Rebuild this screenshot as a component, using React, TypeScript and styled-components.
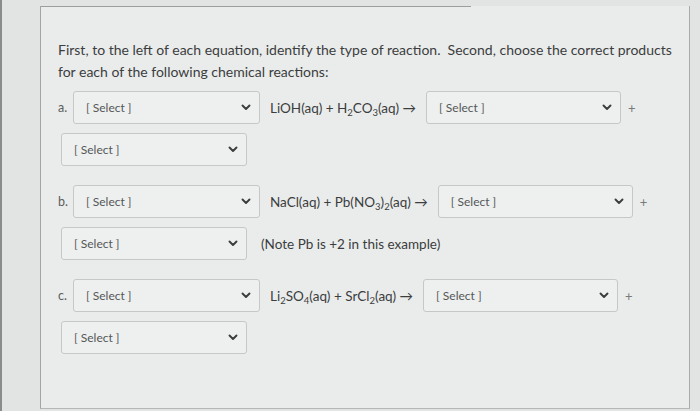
import React from 'react'
import styled, { createGlobalStyle } from 'styled-components'

const GlobalStyle = createGlobalStyle`
  html, body {
    margin: 0;
    padding: 0;
    background: #e2e4e3;
  }
  body {
    font-family: Lato, "Open Sans", sans-serif;
    color: #3b3d3e;
  }
`

const Page = styled.div`
  width: 700px;
  height: 411px;
  overflow: hidden;
  border-left: 2px solid #8a8c8c;
  box-sizing: border-box;
  padding: 6px 0 0 38px;
`

const Card = styled.div`
  width: 650px;
  height: 403px;
  box-sizing: border-box;
  border-left: 1px solid #a3a5a5;
  border-right: 1px solid #a9abab;
  border-bottom: 1px solid #b5b7b7;
  background:
    linear-gradient(#9c9e9e, #9c9e9e) top left / 430px 1px no-repeat,
    #eaeceb;
  padding: 33px 0 0 17px;
`

const Prompt = styled.p`
  margin: 0;
  font-size: 14px;
  line-height: 22px;
  width: 616px;
`

const Question = styled.div<{ $first?: boolean }>`
  display: flex;
  flex-direction: column;
  gap: 9px;
  margin-top: ${(p) => (p.$first ? '8px' : '19px')};
`

const Row = styled.div<{ $indent?: number }>`
  display: flex;
  align-items: center;
  padding-left: ${(p) => p.$indent ?? 0}px;
`

const Letter = styled.span`
  width: 15px;
  font-size: 12.5px;
  color: #5a5c5d;
`

const SelectBox = styled.div<{ $w: number }>`
  width: ${(p) => p.$w}px;
  height: 33px;
  box-sizing: border-box;
  border: 1px solid #c6c8c7;
  border-radius: 3px;
  background: #eef0ef;
  display: flex;
  align-items: center;
  justify-content: space-between;
  padding: 0 8px 0 12px;
  font-size: 12px;
  color: #555758;
`

const Equation = styled.span`
  font-size: 13.5px;
  margin: 0 10px 0 10px;
  white-space: nowrap;
  sub {
    font-size: 9.5px;
    vertical-align: -3px;
    line-height: 0;
  }
`

const Plus = styled.span`
  margin-left: 7px;
  font-size: 13px;
  color: #77797a;
`

const Note = styled.span`
  font-size: 13.5px;
  margin-left: 14px;
`

const Chevron = () => (
  <svg width="10" height="7" viewBox="0 0 10 7">
    <path d="M1.5 1.5 L5 5 L8.5 1.5" fill="none" stroke="#3a3c3d" strokeWidth="1.9" strokeLinecap="round" strokeLinejoin="round" />
  </svg>
)

const Select = ({ w }: { w: number }) => (
  <SelectBox $w={w}>
    <span>[ Select ]</span>
    <Chevron />
  </SelectBox>
)

type Item = {
  letter: string
  equation: React.ReactNode
  note?: string
}

const items: Item[] = [
  {
    letter: 'a.',
    equation: (
      <>
        LiOH(aq) + H<sub>2</sub>CO<sub>3</sub>(aq) →
      </>
    ),
  },
  {
    letter: 'b.',
    equation: (
      <>
        NaCl(aq) + Pb(NO<sub>3</sub>)<sub>2</sub>(aq) →
      </>
    ),
    note: '(Note Pb is +2 in this example)',
  },
  {
    letter: 'c.',
    equation: (
      <>
        Li<sub>2</sub>SO<sub>4</sub>(aq) + SrCl<sub>2</sub>(aq) →
      </>
    ),
  },
]

export default function App() {
  return (
    <>
      <GlobalStyle />
      <Page>
        <Card>
          <Prompt>
            First, to the left of each equation, identify the type of reaction.&nbsp; Second, choose the correct products
            for each of the following chemical reactions:
          </Prompt>
          {items.map((item, i) => (
            <Question key={item.letter} $first={i === 0}>
              <Row>
                <Letter>{item.letter}</Letter>
                <Select w={187} />
                <Equation>{item.equation}</Equation>
                <Select w={195} />
                <Plus>+</Plus>
              </Row>
              <Row $indent={3}>
                <Select w={186} />
                {item.note && <Note>{item.note}</Note>}
              </Row>
            </Question>
          ))}
        </Card>
      </Page>
    </>
  )
}
